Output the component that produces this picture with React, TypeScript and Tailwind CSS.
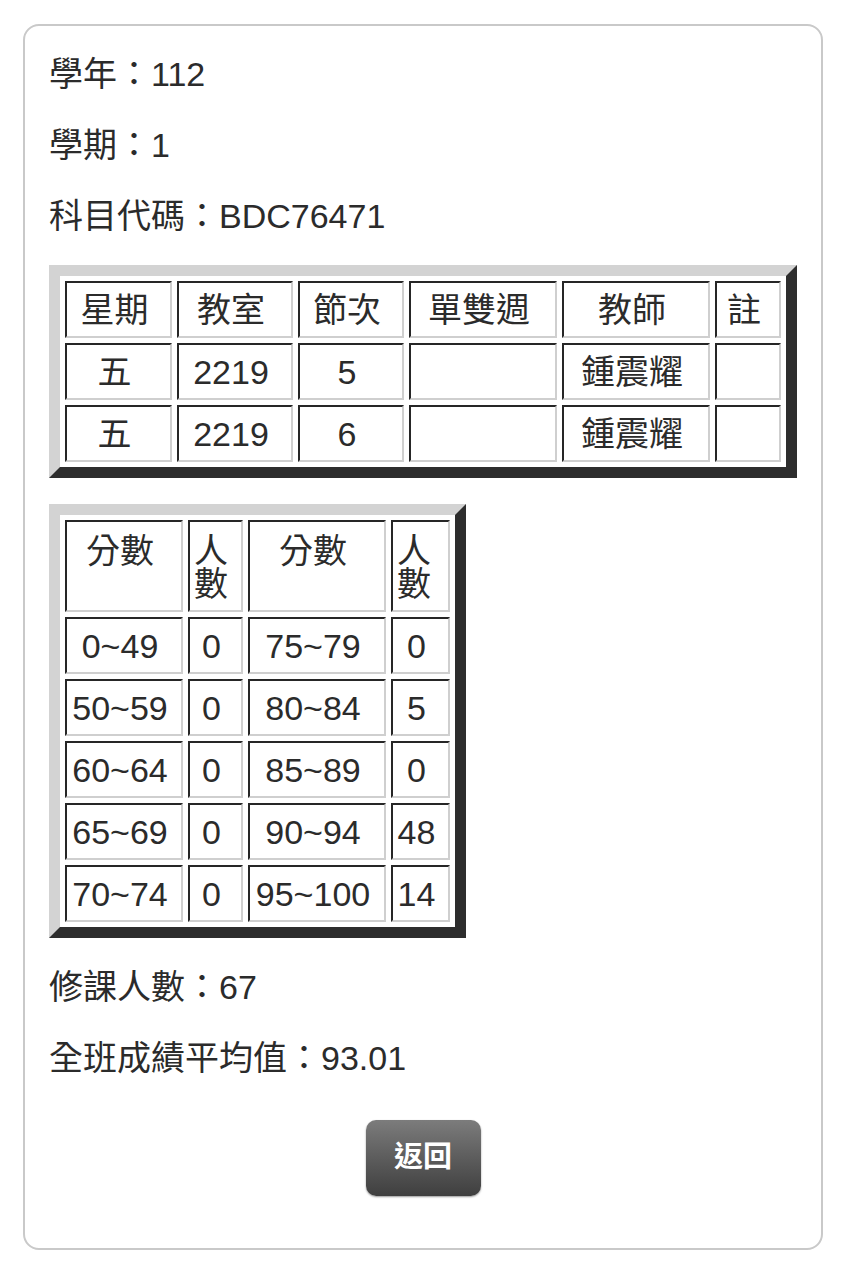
import * as React from 'react';

const font = { fontFamily: '"Liberation Sans", "Noto Sans CJK TC", sans-serif' };

const scheduleHead = [
  { label: '星期', w: 'w-[107px]' },
  { label: '教室', w: 'w-[116px]' },
  { label: '節次', w: 'w-[106px]' },
  { label: '單雙週', w: 'w-[148px]' },
  { label: '教師', w: 'w-[148px]' },
  { label: '註', w: 'w-[66px]' },
];

const scheduleRows = [
  ['五', '2219', '5', '', '鍾震耀', ''],
  ['五', '2219', '6', '', '鍾震耀', ''],
];

const gradeRows = [
  ['0~49', '0', '75~79', '0'],
  ['50~59', '0', '80~84', '5'],
  ['60~64', '0', '85~89', '0'],
  ['65~69', '0', '90~94', '48'],
  ['70~74', '0', '95~100', '14'],
];

const gradeWidths = ['w-[118px]', 'w-[55px]', 'w-[138px]', 'w-[59px]'];

// outset frame like an old <table border=...>
const tableCls =
  'border-separate border-spacing-[5px] border-[11px] border-t-[#d3d3d3] border-l-[#d3d3d3] border-r-[#2d2d2d] border-b-[#2d2d2d]';

// inset cell
const cellCls =
  'border-2 border-t-[#262626] border-l-[#262626] border-r-[#cfcfcf] border-b-[#cfcfcf] p-0 whitespace-nowrap';

export default function App() {
  return (
    <div className="bg-white min-h-[1279px] pt-[24px] px-[23px] text-[#2b2b2b]" style={font}>
      <div className="border-2 border-[#c9c9c9] rounded-[16px] pt-[28px] pb-[52px] pl-[24px] pr-[24px]">
        <div className="flex flex-col gap-[31px] text-[34px] leading-[40px]">
          <p>學年：112</p>
          <p>學期：1</p>
          <p>科目代碼：BDC76471</p>
        </div>

        <table className={`${tableCls} mt-[29px] text-[34px] leading-[40px]`}>
          <tbody>
            <tr>
              {scheduleHead.map((h) => (
                <td key={h.label} className={`${cellCls} ${h.w} h-[57px] text-center pr-[8px] font-normal`}>
                  {h.label}
                </td>
              ))}
            </tr>
            {scheduleRows.map((row, i) => (
              <tr key={i}>
                {row.map((c, j) => (
                  <td key={j} className={`${cellCls} ${scheduleHead[j].w} h-[57px] text-center pr-[8px]`}>
                    {c}
                  </td>
                ))}
              </tr>
            ))}
          </tbody>
        </table>

        <table className={`${tableCls} mt-[26px] text-[34px] leading-[40px]`}>
          <tbody>
            <tr>
              <td className={`${cellCls} ${gradeWidths[0]} h-[92px] align-top text-center pr-[8px] pt-[13px] leading-[33px]`}>
                分數
              </td>
              <td className={`${cellCls} ${gradeWidths[1]} h-[92px] align-top text-left pl-[4px] pt-[13px] leading-[33px] whitespace-normal`}>
                人<br />數
              </td>
              <td className={`${cellCls} ${gradeWidths[2]} h-[92px] align-top text-center pr-[8px] pt-[13px] leading-[33px]`}>
                分數
              </td>
              <td className={`${cellCls} ${gradeWidths[3]} h-[92px] align-top text-left pl-[4px] pt-[13px] leading-[33px] whitespace-normal`}>
                人<br />數
              </td>
            </tr>
            {gradeRows.map((row, i) => (
              <tr key={i}>
                {row.map((c, j) => (
                  <td key={j} className={`${cellCls} ${gradeWidths[j]} h-[57px] text-center pr-[8px]`}>
                    {c}
                  </td>
                ))}
              </tr>
            ))}
          </tbody>
        </table>

        <div className="mt-[29px] flex flex-col gap-[31px] text-[34px] leading-[40px]">
          <p>修課人數：67</p>
          <p>全班成績平均值：93.01</p>
        </div>

        <div className="mt-[42px] flex justify-center">
          <button className="w-[115px] h-[76px] rounded-[10px] bg-gradient-to-b from-[#7c7c7c] to-[#3f3f3f] text-white text-[29px] font-bold shadow-[0_1px_2px_rgba(0,0,0,0.4)]">
            返回
          </button>
        </div>
      </div>
    </div>
  );
}
